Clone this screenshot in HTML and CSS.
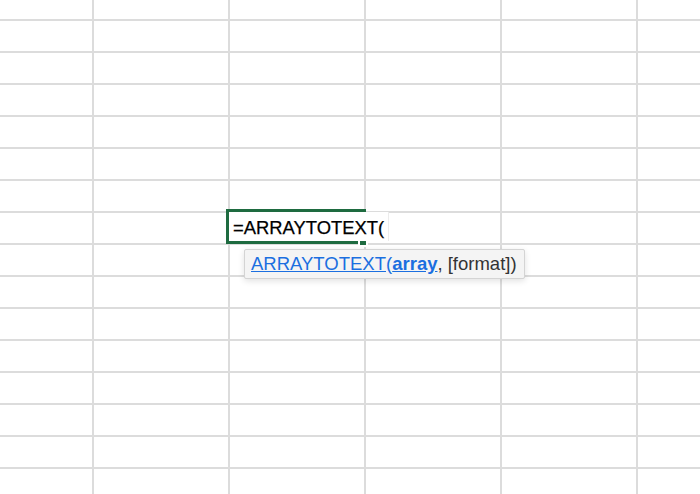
FILE: index.html
```html
<!DOCTYPE html>
<html lang="en">
<head>
    <meta charset="UTF-8">
    <title>Sheet</title>
    <link rel="stylesheet" href="styles.css">
</head>
<body>

    <div class="sheet" id="sheet"></div>

    <script>
        // build the empty grid, then drop the editor into one cell
        const sheet = document.getElementById('sheet');
        const ROWS = 16;
        const COLS = 6;

        for (let r = 0; r < ROWS; r++) {
            for (let c = 0; c < COLS; c++) {
                const cell = document.createElement('div');
                cell.className = 'cell';
                if (r === ROWS - 1) cell.classList.add('last-row');
                if (c === COLS - 1) cell.classList.add('last-col');
                if (r === 7 && c === 2) {
                    cell.classList.add('active');
                    cell.innerHTML =
                        '<div class="selection"><span class="handle"></span></div>' +
                        '<div class="editor">=ARRAYTOTEXT(</div>' +
                        '<div class="hint">' +
                            '<span class="fn">ARRAYTOTEXT</span><span class="paren">(</span>' +
                            '<span class="arg">array</span>, [format])' +
                        '</div>';
                }
                sheet.appendChild(cell);
            }
        }
    </script>

</body>
</html>
```

FILE: styles.css
```css
body {
    margin: 0;
    background: #ffffff;
    font-family: 'Liberation Sans', Arial, Helvetica, sans-serif;
    overflow: hidden;
    width: 700px;
    height: 494px;
}

.sheet {
    display: grid;
    grid-template-columns: 94px repeat(4, 136px) 62px;
    grid-template-rows: 21px repeat(14, 32px) 25px;
    width: 700px;
    height: 494px;
}

.cell {
    box-sizing: border-box;
    border-right: 2px solid #dcdcdc;
    border-bottom: 2px solid #dcdcdc;
}

.last-row {
    border-bottom: none;
}

.last-col {
    border-right: none;
}

.active {
    position: relative;
}

.selection {
    position: absolute;
    left: -4px;
    top: -4px;
    width: 140px;
    height: 35px;
    box-sizing: border-box;
    border: 3px solid #1e6b40;
    z-index: 2;
}

.handle {
    position: absolute;
    right: -5px;
    bottom: -6px;
    width: 6px;
    height: 6px;
    background: #1e6b40;
    border: 2px solid #ffffff;
}

/* text being typed, spills past the cell edge */
.editor {
    position: absolute;
    left: -1px;
    top: -1px;
    height: 29px;
    padding: 0 4px 0 4px;
    background: #ffffff;
    font-size: 18.4px;
    line-height: 31px;
    color: #000;
    -webkit-text-stroke: 0.25px #000;
    white-space: nowrap;
    z-index: 3;
    border-right: 1px solid #ececec;
}

.hint {
    position: absolute;
    left: 14px;
    top: 36px;
    height: 30px;
    box-sizing: border-box;
    padding: 0 7px 0 6px;
    background: #f4f4f4;
    border: 1px solid #d4d4d4;
    border-radius: 2px;
    box-shadow: 0 2px 6px rgba(0, 0, 0, 0.12);
    font-size: 18.5px;
    line-height: 28px;
    color: #333;
    white-space: nowrap;
    z-index: 4;
}

.fn,
.paren,
.arg {
    color: #1b6fe0;
}

.fn,
.arg {
    text-decoration: underline;
}

.arg {
    font-weight: bold;
}
```
